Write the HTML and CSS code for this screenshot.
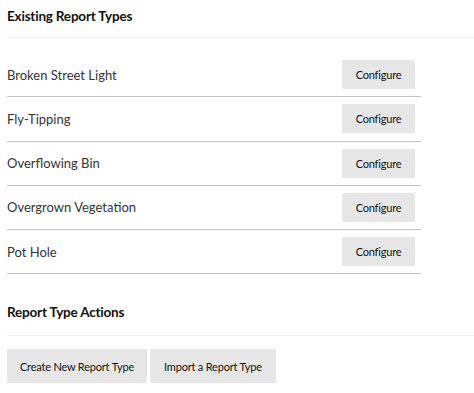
FILE: index.html
```html
<!DOCTYPE html>
<html>
<head>
<meta charset="utf-8">
<link rel="stylesheet" href="styles.css">
</head>
<body>
<div class="page">
  <h2 class="section-title">Existing Report Types</h2>
  <ul class="type-list">
    <li class="type-row"><span class="type-name">Broken Street Light</span><button class="btn btn-small">Configure</button></li>
    <li class="type-row"><span class="type-name">Fly-Tipping</span><button class="btn btn-small">Configure</button></li>
    <li class="type-row"><span class="type-name">Overflowing Bin</span><button class="btn btn-small">Configure</button></li>
    <li class="type-row"><span class="type-name">Overgrown Vegetation</span><button class="btn btn-small">Configure</button></li>
    <li class="type-row"><span class="type-name">Pot Hole</span><button class="btn btn-small">Configure</button></li>
  </ul>
  <h2 class="section-title section-title-2">Report Type Actions</h2>
  <div class="actions">
    <button class="btn btn-large">Create New Report Type</button>
    <button class="btn btn-large btn-import">Import a Report Type</button>
  </div>
</div>
</body>
</html>
```
FILE: styles.css
```css
* { box-sizing: border-box; }
html, body { margin: 0; padding: 0; background: #fff; }
body {
  font-family: Lato, "Open Sans", sans-serif;
  color: #222;
}
.page {
  padding-left: 7px;
}
.section-title {
  margin: 0;
  font-size: 13.5px;
  letter-spacing: -0.2px;
  font-weight: 700;
  height: 38px;
  line-height: 32px;
  border-bottom: 1px solid #eeeeee;
  color: #111;
}
.type-list {
  list-style: none;
  margin: 15px 0 0 0;
  padding: 0;
  width: 414px;
}
.type-row {
  display: flex;
  align-items: center;
  justify-content: space-between;
  height: 44.25px;
  padding: 7px 6px 7px 0;
  border-bottom: 1px solid #c4c4c4;
}
.type-name {
  font-size: 13px;
  color: #333;
}
.btn {
  border: none;
  background: #e7e7e7;
  font-family: inherit;
  color: #111;
  margin: 0;
  cursor: pointer;
  font-size: 11px;
  letter-spacing: -0.2px;
}
.btn-small {
  width: 73px;
  height: 29px;
  padding: 0;
}
.section-title-2 {
  margin-top: 22px;
  height: 40px;
  line-height: 32px;
}
.actions {
  display: flex;
  gap: 3px;
  margin-top: 13px;
}
.btn-large {
  height: 34px;
  padding: 0 13px;
}
.btn-import {
  padding: 0 14px;
}
```
